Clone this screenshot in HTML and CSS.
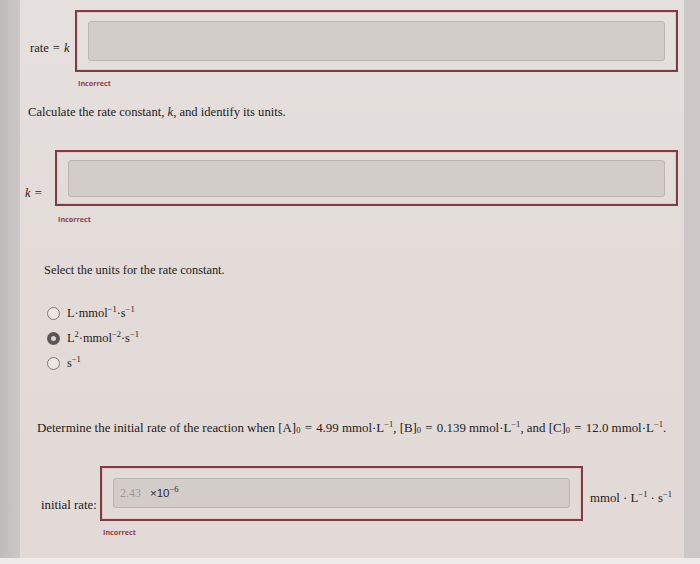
FILE: index.html
```html
<!DOCTYPE html>
<html>
<head>
<meta charset="utf-8">
<link rel="stylesheet" href="styles.css">
</head>
<body>
<div class="screen">
  <div class="strip-left"></div>
  <div class="panel">
    <div class="row row1">
      <div class="lbl lbl1">rate <span class="eq">=</span> <i>k</i></div>
      <div class="box box1"><div class="field field1"></div></div>
    </div>
    <div class="err err1">Incorrect</div>
    <p class="txt calc">Calculate the rate constant, <i>k</i>, and identify its units.</p>

    <div class="row row2">
      <div class="lbl lbl2"><i>k</i> <span class="eq">=</span></div>
      <div class="box box2"><div class="field field2"></div></div>
    </div>
    <div class="err err2">Incorrect</div>

    <p class="txt select">Select the units for the rate constant.</p>
    <div class="opts">
      <div class="opt"><span class="radio"></span><span class="otext">L·mmol<sup>−1</sup>·s<sup>−1</sup></span></div>
      <div class="opt"><span class="radio on"></span><span class="otext">L<sup>2</sup>·mmol<sup>−2</sup>·s<sup>−1</sup></span></div>
      <div class="opt"><span class="radio"></span><span class="otext">s<sup>−1</sup></span></div>
    </div>

    <p class="txt det">Determine the initial rate of the reaction when [A]<sub>0</sub> <span class="eq">=</span> 4.99 mmol·L<sup>−1</sup>, [B]<sub>0</sub> <span class="eq">=</span> 0.139 mmol·L<sup>−1</sup>, and [C]<sub>0</sub> <span class="eq">=</span> 12.0 mmol·L<sup>−1</sup>.</p>

    <div class="row row3">
      <div class="lbl lbl3">initial rate:</div>
      <div class="box box3"><div class="field field3"><span class="val">2.43</span><span class="exp">×10<sup>−6</sup></span></div></div>
      <div class="units">mmol · L<sup>−1</sup> · s<sup>−1</sup></div>
    </div>
    <div class="err err3">Incorrect</div>
  </div>
  <div class="strip-right"></div>
</div>
<div class="bottom"></div>
</body>
</html>
```
FILE: styles.css
```css
html, body {
  margin: 0;
  padding: 0;
  width: 700px;
  height: 564px;
  overflow: hidden;
  background: #ece8e6;
  font-family: "Liberation Serif", "Times New Roman", serif;
  color: #242020;
}
.screen {
  display: flex;
  height: 558px;
}
.strip-left {
  width: 20px;
  background: linear-gradient(to right, #bfbbbb, #ccc8c7);
}
.strip-right {
  width: 16px;
  background: #cdc7c7;
}
.panel {
  flex: 1;
  background: linear-gradient(to bottom, #e5e0de 0%, #e2dbd8 50%, #e3dad7 100%);
}
.bottom {
  height: 6px;
  background: #eeebea;
}
.row {
  display: flex;
  align-items: center;
}
.lbl {
  font-size: 12.5px;
  line-height: 15px;
  white-space: nowrap;
}
.eq { padding: 0 1px; }
.box {
  box-sizing: border-box;
  border: 2px solid #7c3d44;
  box-shadow: inset 0 0 0 1px #e9c4c6;
  padding: 0 11px;
  display: flex;
  align-items: center;
}
.field {
  box-sizing: border-box;
  flex: 1;
  background: #d3cdca;
  border: 1px solid #bcb6b3;
  border-radius: 3px;
}
.row1 { margin-top: 10px; padding-left: 10px; }
.lbl1 { width: 45px; padding-top: 14px; }
.box1 { width: 603px; height: 62px; }
.field1 { height: 40px; }

.err {
  font-family: "Open Sans", "Noto Sans", sans-serif;
  font-size: 7.2px;
  font-weight: 700;
  color: #8f3f47;
  line-height: 8px;
}
.err1 { margin: 7px 0 0 58px; }

.txt { margin: 0; font-size: 12.6px; line-height: 15px; white-space: nowrap; }
.calc { margin: 17.5px 0 0 8px; }

.row2 { margin-top: 30.5px; padding-left: 5px; }
.lbl2 { width: 30px; padding-top: 30px; }
.box2 { width: 623px; height: 56px; }
.field2 { height: 37px; }
.err2 { margin: 9px 0 0 38px; }

.select { margin: 39.5px 0 0 24px; font-size: 12.4px; }
.opts { margin: 29px 0 0 27px; }
.opt {
  display: flex;
  align-items: center;
  height: 13px;
  margin-bottom: 12px;
  font-size: 12.4px;
}
.radio {
  box-sizing: border-box;
  width: 13px;
  height: 13px;
  border-radius: 50%;
  border: 1.4px solid #7f7a79;
  background: #ebe7e5;
  margin-right: 7px;
}
.radio.on {
  border: 4px solid #5c5757;
  background: #dcd7d5;
}
.otext { line-height: 13px; }
.otext sup { font-size: 8.5px; vertical-align: 5px; line-height: 0; }
.det { margin: 51.5px 0 0 17px; font-size: 12.9px; }
.det sup, .units sup, .exp sup { font-size: 8.5px; vertical-align: 5px; line-height: 0; }
.det sub { font-size: 8.5px; vertical-align: -1px; line-height: 0; }

.row3 { margin-top: 29.5px; padding-left: 21px; }
.lbl3 { width: 59px; padding-top: 25px; font-size: 12.8px; }
.box3 { width: 483px; height: 55px; padding: 0 11px; }
.field3 { height: 30px; display: flex; align-items: flex-start; padding: 7px 0 0 6px; font-size: 12px; line-height: 15px; }
.val { color: #9c9794; margin-right: 9px; }
.exp { color: #2e2a2a; font-family: "Liberation Sans", Arial, sans-serif; font-size: 11.5px; }
.exp sup { font-family: "Liberation Serif", serif; }
.units { margin-left: 7px; font-size: 12.8px; line-height: 15px; padding-top: 11px; white-space: nowrap; }
.err3 { margin: 7px 0 0 83px; }
```
